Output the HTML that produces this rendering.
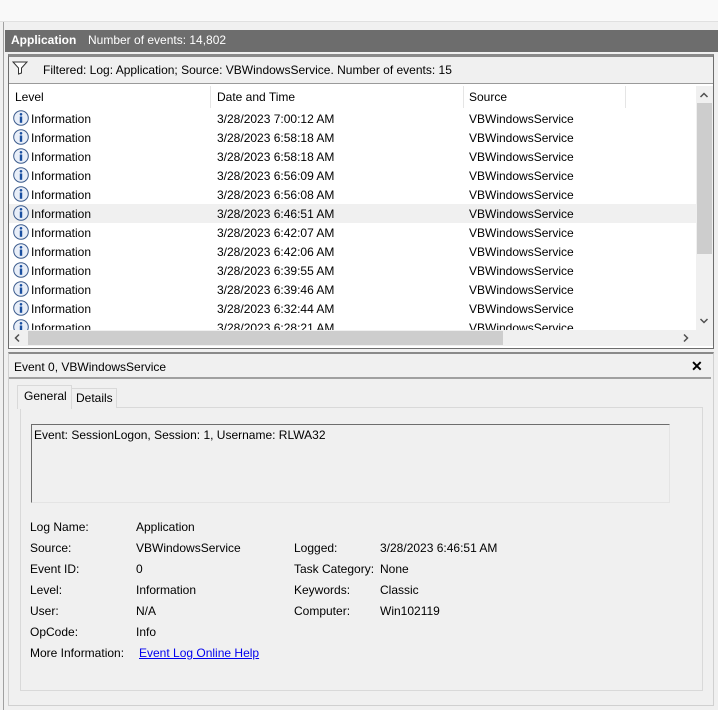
<!DOCTYPE html>
<html><head><style>
body{margin:0;width:718px;height:710px;background:#f0f0f0;font-family:"Liberation Sans",sans-serif;font-size:12px;color:#000;position:relative;overflow:hidden}
.a{position:absolute;white-space:nowrap}
.row{position:absolute;left:9px;width:687px;height:19px}
.row span{position:absolute;top:3px}
.ic{position:absolute;left:4px;top:1px;width:16px;height:16px}
</style></head><body>
<div class="a" style="left:0;top:0;width:718px;height:21px;background:#f9f9f9;border-bottom:1px solid #e0e0e0"></div>
<div class="a" style="left:0;top:22px;width:3px;height:688px;border-right:1px solid #a0a0a0"></div>
<div class="a" style="left:5px;top:30px;width:713px;height:22px;background:#6d6d6d"></div>
<div class="a" style="left:11px;top:33px;color:#fff;font-weight:bold;font-size:12px">Application</div>
<div class="a" style="left:88px;top:33px;color:#fff">Number of events: 14,802</div>
<div class="a" style="left:8px;top:54px;width:704px;height:291px;border:1px solid #6d6d6d;border-top:3px solid #8a8a8a;background:#fff"></div>
<div class="a" style="left:9px;top:57px;width:704px;height:26px;background:#f0f0f0;border-bottom:1px solid #9a9a9a"></div>
<svg class="a" style="left:12px;top:61px" width="16" height="14" viewBox="0 0 16 14"><path d="M1 1H15L9.5 7V12L6.5 13V7Z" fill="#fff" stroke="#333" stroke-width="1"/></svg>
<div class="a" style="left:43px;top:63px">Filtered: Log: Application; Source: VBWindowsService. Number of events: 15</div>
<div class="a" style="left:210px;top:86px;width:1px;height:22px;background:#e5e5e5"></div>
<div class="a" style="left:463px;top:86px;width:1px;height:22px;background:#e5e5e5"></div>
<div class="a" style="left:625px;top:86px;width:1px;height:22px;background:#e5e5e5"></div>
<div class="a" style="left:15px;top:90px">Level</div>
<div class="a" style="left:217px;top:90px">Date and Time</div>
<div class="a" style="left:469px;top:90px">Source</div>
<div style="position:absolute;left:0;top:0;width:696px;height:330px;overflow:hidden">
<div id="rows"></div>
</div>
<div class="a" style="left:696px;top:86px;width:17px;height:244px;background:#f0f0f0"></div>
<div class="a" style="left:697px;top:103px;width:15px;height:151px;background:#cdcdcd"></div>
<svg class="a" style="left:699px;top:91px" width="10" height="8" viewBox="0 0 10 8"><path d="M1.5 6L5 2.5L8.5 6" fill="none" stroke="#505050" stroke-width="1.5"/></svg>
<svg class="a" style="left:699px;top:317px" width="10" height="8" viewBox="0 0 10 8"><path d="M1.5 2L5 5.5L8.5 2" fill="none" stroke="#505050" stroke-width="1.5"/></svg>
<div class="a" style="left:9px;top:330px;width:704px;height:16px;background:#f0f0f0"></div>
<div class="a" style="left:28px;top:331px;width:475px;height:14px;background:#cdcdcd"></div>
<svg class="a" style="left:13px;top:333px" width="8" height="10" viewBox="0 0 8 10"><path d="M6 1.5L2.5 5L6 8.5" fill="none" stroke="#505050" stroke-width="1.5"/></svg>
<svg class="a" style="left:682px;top:333px" width="8" height="10" viewBox="0 0 8 10"><path d="M2 1.5L5.5 5L2 8.5" fill="none" stroke="#505050" stroke-width="1.5"/></svg>
<div class="a" style="left:8px;top:352px;width:704px;height:351px;border:1px solid #d0d0d0;border-top:2px solid #8a8a8a"></div>
<div class="a" style="left:9px;top:377px;width:702px;height:2px;background:#a0a0a0"></div>
<div class="a" style="left:14px;top:360px">Event 0, VBWindowsService</div>
<div class="a" style="left:691px;top:358px;font-weight:bold;font-size:14px">&#10005;</div>
<div class="a" style="left:20px;top:407px;width:681px;height:282px;border:1px solid #d9d9d9;background:#f0f0f0"></div>
<div class="a" style="left:17px;top:385px;width:53px;height:23px;border:1px solid #d9d9d9;border-bottom:none;background:#f0f0f0"></div>
<div class="a" style="left:24px;top:389px">General</div>
<div class="a" style="left:71px;top:388px;width:44px;height:19px;border:1px solid #d9d9d9;border-bottom:none;background:#f0f0f0"></div>
<div class="a" style="left:76px;top:391px">Details</div>
<div class="a" style="left:31px;top:424px;width:637px;height:77px;border:1px solid #e4e4e4;border-top:1px solid #6d6d6d;border-left:1px solid #6d6d6d"></div>
<div class="a" style="left:34px;top:428px">Event: SessionLogon, Session: 1, Username: RLWA32</div>
<div class="a" style="left:30px;top:520px">Log Name:</div><div class="a" style="left:136px;top:520px">Application</div>
<div class="a" style="left:30px;top:541px">Source:</div><div class="a" style="left:136px;top:541px">VBWindowsService</div>
<div class="a" style="left:294px;top:541px">Logged:</div><div class="a" style="left:380px;top:541px">3/28/2023 6:46:51 AM</div>
<div class="a" style="left:30px;top:562px">Event ID:</div><div class="a" style="left:136px;top:562px">0</div>
<div class="a" style="left:294px;top:562px">Task Category:</div><div class="a" style="left:380px;top:562px">None</div>
<div class="a" style="left:30px;top:583px">Level:</div><div class="a" style="left:136px;top:583px">Information</div>
<div class="a" style="left:294px;top:583px">Keywords:</div><div class="a" style="left:380px;top:583px">Classic</div>
<div class="a" style="left:30px;top:604px">User:</div><div class="a" style="left:136px;top:604px">N/A</div>
<div class="a" style="left:294px;top:604px">Computer:</div><div class="a" style="left:380px;top:604px">Win102119</div>
<div class="a" style="left:30px;top:625px">OpCode:</div><div class="a" style="left:136px;top:625px">Info</div>
<div class="a" style="left:30px;top:646px">More Information:</div><div class="a" style="left:139px;top:646px;color:#0000ee;text-decoration:underline">Event Log Online Help</div>
<script>
var t=["7:00:12","6:58:18","6:58:18","6:56:09","6:56:08","6:46:51","6:42:07","6:42:06","6:39:55","6:39:46","6:32:44","6:28:21"],h="";
for(var i=0;i<t.length;i++){h+='<div class="row" style="top:'+(109+i*19)+'px;'+(i==5?'background:#f0f0f0':'')+'"><svg class="ic" viewBox="0 0 16 16"><circle cx="8" cy="8" r="7.3" fill="#e8eef8" stroke="#3a5a8c"/><circle cx="8" cy="4.3" r="1.3" fill="#1a4fa0"/><rect x="6.8" y="6.5" width="2.4" height="6.3" fill="#1a4fa0"/></svg><span style="left:22px">Information</span><span style="left:208px">3/28/2023 '+t[i]+' AM</span><span style="left:460px">VBWindowsService</span></div>';}
document.getElementById("rows").innerHTML=h;
</script>
</body></html>
